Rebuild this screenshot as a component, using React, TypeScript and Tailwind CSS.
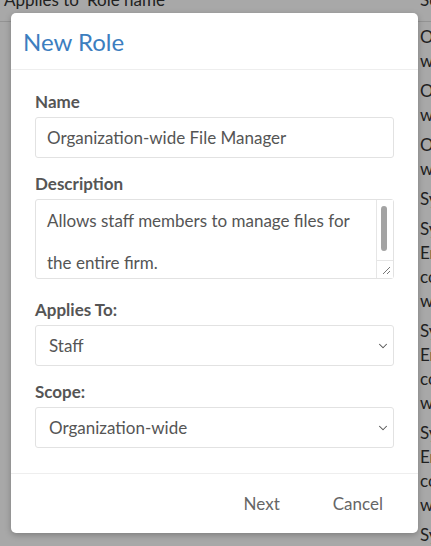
import { ChevronDown } from "lucide-react";

const rows: string[][] = [
  ["Organization-wide"],
  ["Organization-wide"],
  ["Organization-wide"],
  ["System"],
  ["System", "Entire", "company", "wide"],
  ["System", "Entire", "company", "wide"],
  ["System", "Entire", "company", "wide"],
  ["System"],
];

function Field({ label, children, className }: { label: string; children: React.ReactNode; className?: string }) {
  return (
    <div className={className}>
      <label className="mb-[4px] block text-[17px] font-bold leading-[22px] text-[#555]">{label}</label>
      {children}
    </div>
  );
}

function Select({ value }: { value: string }) {
  return (
    <div className="relative">
      <select
        defaultValue={value}
        className="block h-[41px] w-full appearance-none rounded-[3px] border border-[#e2e2e2] bg-white pl-[13px] text-[17px] text-[#555] outline-none"
      >
        <option>{value}</option>
      </select>
      <ChevronDown
        className="pointer-events-none absolute right-[4px] top-[14px] h-[14px] w-[14px] text-[#555]"
        strokeWidth={1.8}
      />
    </div>
  );
}

export default function App() {
  return (
    <div className="relative h-[546px] w-[431px] overflow-hidden bg-white font-['Lato',sans-serif] text-[#333]">
      {/* page behind the dialog */}
      <table className="-mt-[14px] w-[560px] table-fixed border-collapse text-[17px]">
        <thead>
          <tr className="border-b border-[#e0e0e0]">
            <th className="w-[86px] whitespace-nowrap pb-[7px] pl-[4px] text-left font-normal leading-[28px]">Applies to</th>
            <th className="w-[331px] pb-[7px] pl-[1px] text-left font-normal leading-[28px]">Role name</th>
            <th className="w-[80px] pb-[7px] pl-[3px] text-left font-normal leading-[28px]">Scope</th>
            <th />
          </tr>
        </thead>
        <tbody>
          {rows.map((r, i) => (
            <tr key={i}>
              <td className="py-[3px]" />
              <td />
              <td className="py-[3px] pl-[3px] align-top leading-6">
                <div className="w-[70px]">
                  {r.map((t, j) => (
                    <div key={j}>{t}</div>
                  ))}
                </div>
              </td>
              <td />
            </tr>
          ))}
        </tbody>
      </table>

      <div className="absolute inset-0 bg-black/[0.34]" />

      <div className="absolute left-[11px] top-[13px] w-[407px] rounded-[5px] bg-white shadow-[0_2px_6px_rgba(0,0,0,0.25)]">
        <div className="border-b border-[#eee] px-[12px] pb-[13px] pt-[14px]">
          <h1 className="text-[24px] leading-[29px] text-[#3c7ebf]">New Role</h1>
        </div>

        <div className="px-[24px] pb-[25px] pt-[21px]">
          <Field label="Name" className="mb-[15px]">
            <input
              defaultValue="Organization-wide File Manager"
              className="block h-[41px] w-full rounded-[3px] border border-[#e2e2e2] px-[11px] text-[17px] text-[#555] outline-none"
            />
          </Field>

          <Field label="Description" className="mb-[20px]">
            <div className="relative">
              <textarea
                defaultValue="Allows staff members to manage files for the entire firm."
                className="block h-[80px] w-full resize-none overflow-hidden rounded-[3px] border border-[#e2e2e2] pl-[11px] pr-[24px] pt-0 text-[17px] leading-[42px] text-[#555] outline-none"
              />
              <div className="pointer-events-none absolute bottom-[1px] right-[1px] top-[1px] w-[17px] border-l border-[#e6e6e6] bg-white">
                <div className="ml-[4px] mt-[6px] h-[45px] w-[6px] rounded-full bg-[#a3a3a3]" />
                <div className="absolute bottom-[17px] left-0 right-0 border-t border-[#e6e6e6]" />
                <svg className="absolute bottom-[3px] right-[2px]" width="9" height="9" viewBox="0 0 9 9">
                  <path d="M1 8 L8 1 M5 8 L8 5" stroke="#777" strokeWidth="1" />
                </svg>
              </div>
            </div>
          </Field>

          <Field label="Applies To:" className="mb-[15px]">
            <Select value="Staff" />
          </Field>

          <Field label="Scope:">
            <Select value="Organization-wide" />
          </Field>
        </div>

        <div className="flex h-[60px] items-center justify-end gap-[53px] border-t border-[#eee] pr-[35px] text-[17px] text-[#666]">
          <button type="button">Next</button>
          <button type="button">Cancel</button>
        </div>
      </div>
    </div>
  );
}
